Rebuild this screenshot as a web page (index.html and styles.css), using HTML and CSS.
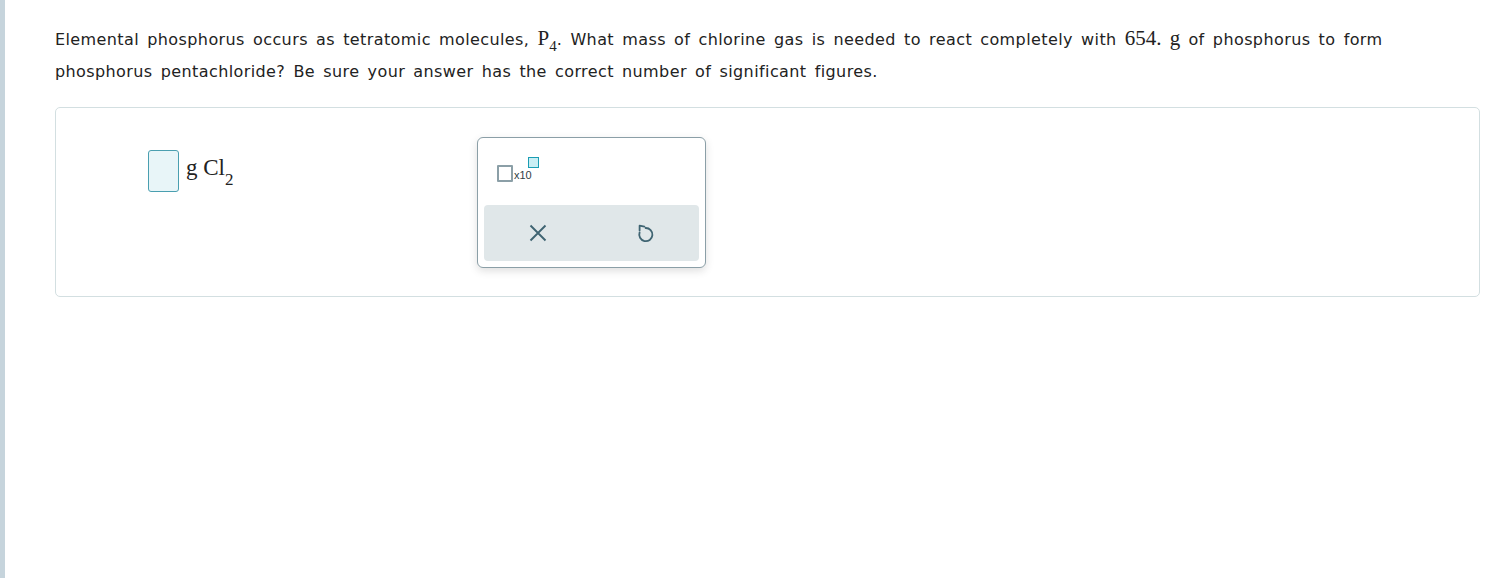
FILE: index.html
```html
<!DOCTYPE html>
<html>
<head>
<meta charset="utf-8">
<link rel="stylesheet" href="styles.css">
</head>
<body>
<div class="rail"></div>
<div class="main">
  <p class="question">Elemental phosphorus occurs as tetratomic molecules, <span class="math">P<sub>4</sub></span>. What mass of chlorine gas is needed to react completely with <span class="math">654.</span> <span class="math">g</span> of phosphorus to form phosphorus pentachloride? Be sure your answer has the correct number of significant figures.</p>
  <div class="answer-box">
    <div class="answer">
      <div class="input"></div>
      <span class="unit">g Cl<sub>2</sub></span>
    </div>
    <div class="palette">
      <div class="sci">
        <span class="sci-box"></span><span class="sci-x">x10</span><span class="sci-exp"></span>
      </div>
      <div class="actions">
        <div class="action">
          <svg class="icon" width="18" height="18" viewBox="0 0 18 18"><path d="M1.5 1.5 L16.5 16.5 M16.5 1.5 L1.5 16.5" stroke="#3f6472" stroke-width="1.9" fill="none"/></svg>
        </div>
        <div class="action">
          <svg class="icon" width="18" height="22" viewBox="0 0 18 22"><path d="M3.6 10.4 A6.6 6.6 0 1 0 9.6 6" stroke="#3f6472" stroke-width="1.8" fill="none" stroke-linecap="round"/><path d="M8.4 4.6 L3.6 3.6 L3.6 8.4" stroke="#3f6472" stroke-width="1.8" fill="none" stroke-linecap="round" stroke-linejoin="round"/></svg>
        </div>
      </div>
    </div>
  </div>
</div>
</body>
</html>
```
FILE: styles.css
```css
html, body {
  margin: 0;
  padding: 0;
  background: #ffffff;
  height: 100%;
}
body {
  display: flex;
  font-family: "DejaVu Sans", Verdana, sans-serif;
  color: #222;
}
.rail {
  width: 5px;
  flex: none;
  background: #c6d4dc;
  min-height: 578px;
}
.main {
  flex: 1;
  padding: 22px 29px 0 50px;
}
.question {
  margin: 0;
  font-size: 16px;
  line-height: 32px;
  letter-spacing: 0.4px;
  word-spacing: 2.7px;
  color: #222;
}
.math {
  font-family: "Liberation Serif", "Times New Roman", serif;
  font-size: 21px;
  word-spacing: 0;
  letter-spacing: 0;
}
.math sub {
  font-size: 15px;
  vertical-align: -6px;
  line-height: 0;
}
.answer-box {
  margin-top: 19px;
  height: 190px;
  border: 1px solid #d3dfe1;
  border-radius: 5px;
  display: flex;
  align-items: flex-start;
  padding: 29px 0 0 92px;
  box-sizing: border-box;
}
.answer {
  display: flex;
  align-items: flex-start;
  margin-top: 13px;
  width: 100px;
}
.input {
  width: 29px;
  height: 40px;
  border: 1px solid #4a9fb0;
  border-radius: 3px;
  background: #e8f5f8;
}
.unit {
  margin-left: 7px;
  margin-top: 6px;
  font-family: "Liberation Serif", "Times New Roman", serif;
  font-size: 23px;
  color: #222;
  line-height: 24px;
}
.unit sub {
  font-size: 17px;
  vertical-align: -10px;
  line-height: 0;
}
.palette {
  margin-left: 229px;
  width: 229px;
  height: 131px;
  border: 1px solid #8b9fa7;
  border-radius: 6px;
  background: #fff;
  box-shadow: 0 3px 8px rgba(0, 0, 0, 0.13);
  display: flex;
  flex-direction: column;
  justify-content: space-between;
  padding: 0 6px 6px 6px;
  box-sizing: border-box;
}
.sci {
  display: flex;
  align-items: flex-end;
  margin: 19px 0 0 13px;
  height: 26px;
}
.sci-box {
  width: 12px;
  height: 13px;
  border: 2px solid #8b9fa7;
  border-radius: 1px;
  margin-bottom: 1px;
}
.sci-x {
  font-family: "Liberation Sans", Arial, sans-serif;
  font-size: 11px;
  color: #2f4046;
  line-height: 11px;
  margin-left: 1px;
  margin-bottom: 2px;
}
.sci-exp {
  align-self: flex-start;
  width: 9px;
  height: 9px;
  border: 1.5px solid #1a9db3;
  background: #c9eef4;
  margin-left: -4px;
}
.actions {
  height: 56px;
  background: #e0e7e9;
  border-radius: 4px;
  display: flex;
  align-items: center;
}
.action {
  flex: 1;
  display: flex;
  justify-content: center;
  align-items: center;
}
.icon {
  display: block;
}
```
